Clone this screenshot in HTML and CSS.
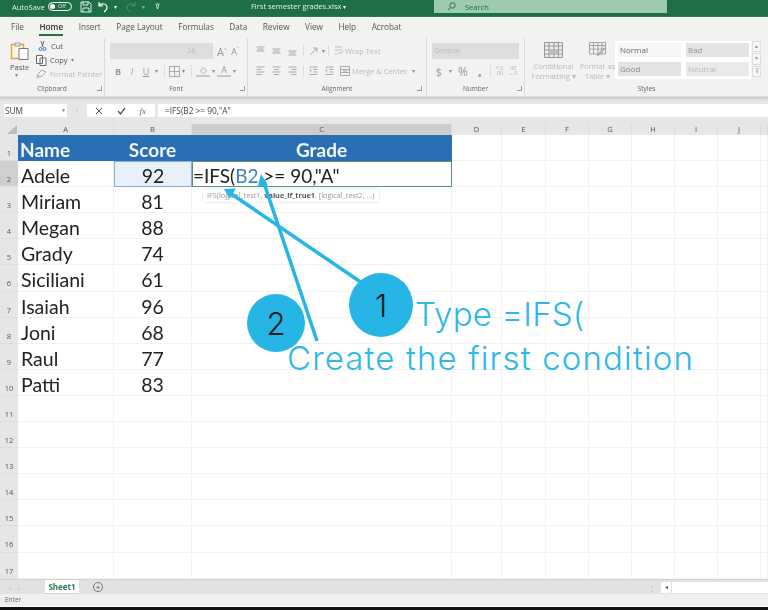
FILE: index.html
```html
<!DOCTYPE html>
<html lang="en">
<head>
<meta charset="utf-8">
<title>First semester grades.xlsx</title>
<link rel="stylesheet" href="styles.css">
</head>
<body>
<div class="page">
<div class="app">
  <header class="titlebar">
    <div class="qat">
      <span class="qat-label">AutoSave</span>
      <span class="toggle"><b></b>Off</span>
      <svg class="ic" width="12" height="12" viewBox="0 0 12 12"><path d="M1 1h8l2 2v8H1zM3 1v3h5V1M3 11V7h6v4" fill="none" stroke="#dfeee6"/></svg>
      <svg class="ic" width="12" height="12" viewBox="0 0 12 12"><path d="M2 1v4h4M2 5c2-3 8-3 8 2 0 2-2 3-3 4" fill="none" stroke="#fff" stroke-width="1.2"/></svg>
      <span class="caret">▾</span>
      <svg class="ic faint" width="12" height="12" viewBox="0 0 12 12"><path d="M10 1v4H6M10 5C8 2 2 2 2 7c0 2 2 3 3 4" fill="none" stroke="#8fbfa6"/></svg>
      <span class="caret faint">▾</span>
      <span class="caret qat-more">⊽</span>
    </div>
    <div class="doc-title">First semester grades.xlsx <span class="caret">▾</span></div>
    <div class="search">
      <svg width="9" height="9" viewBox="0 0 9 9"><circle cx="5.5" cy="3.5" r="2.7" fill="none" stroke="#1f6f47"/><path d="M3.5 5.5 1 8" stroke="#1f6f47"/></svg>
      <span>Search</span>
    </div>
  </header>

  <nav class="tabs">
    <span>File</span><span class="active">Home</span><span>Insert</span><span>Page Layout</span><span>Formulas</span><span>Data</span><span>Review</span><span>View</span><span>Help</span><span>Acrobat</span>
  </nav>

  <section class="ribbon">
    <div class="group g-clip">
      <div class="group-body">
        <div class="paste">
          <svg width="20" height="20" viewBox="0 0 20 20"><path d="M1.5 3.5h12v14h-12z" fill="#fbf3e2" stroke="#d9a441" stroke-width="1.4"/><path d="M5 2h5v3H5z" fill="#eee" stroke="#999"/><path d="M9 7.5h9v11H9z" fill="#fff" stroke="#777"/></svg>
          <span>Paste</span>
          <span class="chev">▾</span>
        </div>
        <div class="clip-list">
          <div class="clip-item"><svg width="9" height="10" viewBox="0 0 9 10"><path d="M3 0l2 6M6 0 4 6" stroke="#666"/><circle cx="2.5" cy="8" r="1.5" fill="none" stroke="#3a7cc2"/><circle cx="6.5" cy="8" r="1.5" fill="none" stroke="#3a7cc2"/></svg><span>Cut</span></div>
          <div class="clip-item"><svg width="11" height="11" viewBox="0 0 11 11"><path d="M.5.5h6v8h-6zM4 3h6v7.500H4z" fill="#fff" stroke="#666"/></svg><span>Copy</span><span class="chev">▾</span></div>
          <div class="clip-item off"><svg width="11" height="10" viewBox="0 0 11 10"><path d="M1 6l5-5 4 2-5 5z" fill="none" stroke="#aaa"/><path d="M1 6 .5 9.500 4 8" fill="#bbb"/></svg><span>Format Painter</span></div>
        </div>
      </div>
      <div class="group-label">Clipboard<i class="launcher"></i></div>
    </div>

    <div class="group g-font">
      <div class="group-body col">
        <div class="tool-row">
          <span class="combo font-name"></span>
          <span class="combo font-size">24</span>
          <span class="glyph big">A<sup>^</sup></span>
          <span class="glyph mid">A<sup>ˇ</sup></span>
        </div>
        <div class="tool-row r2">
          <span class="glyph"><b>B</b></span><span class="glyph"><em>I</em></span><span class="glyph u">U</span><span class="chev">▾</span>
          <span class="sep"></span>
          <svg width="11" height="11" viewBox="0 0 11 11"><path d="M.5.5h10v10H.5zM5.500.5v10M.5 5.500h10" fill="none" stroke="#aaa"/></svg><span class="chev">▾</span>
          <span class="sep"></span>
          <span class="glyph colour fill">◇</span><span class="chev">▾</span>
          <span class="glyph colour txt">A</span><span class="chev">▾</span>
        </div>
      </div>
      <div class="group-label">Font<i class="launcher"></i></div>
    </div>

    <div class="group g-align">
      <div class="group-body col">
        <div class="tool-row a1">
          <svg class="lines" width="11" height="10" viewBox="0 0 10 10"><path d="M1 1h8M2 3h6M1 5h8" stroke="#aaa"/></svg>
          <svg class="lines" width="11" height="10" viewBox="0 0 10 10"><path d="M1 3h8M2 5h6M1 7h8" stroke="#aaa"/></svg>
          <svg class="lines" width="11" height="10" viewBox="0 0 10 10"><path d="M1 5h8M2 7h6M1 9h8" stroke="#aaa"/></svg>
          <span class="sep"></span>
          <svg width="11" height="11" viewBox="0 0 11 11"><path d="M2 9 9 2M5 2h4v4" fill="none" stroke="#aaa"/></svg><span class="chev">▾</span>
          <span class="sep wrap-sep"></span>
          <span class="tool-text"><svg width="9" height="10" viewBox="0 0 9 10"><path d="M1 1h7M1 4h6c2 0 2 3 0 3H4M1 8h2" fill="none" stroke="#bbb"/></svg>Wrap Text</span>
        </div>
        <div class="tool-row a2">
          <svg class="lines" width="11" height="10" viewBox="0 0 10 10"><path d="M1 1h8M1 3.500h5M1 6h8M1 8.500h5" stroke="#aaa"/></svg>
          <svg class="lines" width="11" height="10" viewBox="0 0 10 10"><path d="M1 1h8M2.500 3.500h5M1 6h8M2.500 8.500h5" stroke="#aaa"/></svg>
          <svg class="lines" width="11" height="10" viewBox="0 0 10 10"><path d="M1 1h8M4 3.500h5M1 6h8M4 8.500h5" stroke="#aaa"/></svg>
          <span class="sep"></span>
          <svg class="lines" width="11" height="10" viewBox="0 0 10 10"><path d="M1 1h8M5 3.500h4M5 6h4M1 8.500h8M1 3l2 1.500L1 6" fill="none" stroke="#aaa"/></svg>
          <svg class="lines" width="11" height="10" viewBox="0 0 10 10"><path d="M1 1h8M5 3.500h4M5 6h4M1 8.500h8M3 3 1 4.500 3 6" fill="none" stroke="#aaa"/></svg>
          <span class="tool-text"><svg width="10" height="10" viewBox="0 0 10 10"><path d="M.5.5h9v9h-9zM.5 3.500h9M.5 6.500h9M3 5h4" fill="none" stroke="#aaa"/></svg>Merge &amp; Center<span class="chev">▾</span></span>
        </div>
      </div>
      <div class="group-label">Alignment<i class="launcher"></i></div>
    </div>

    <div class="group g-num">
      <div class="group-body col">
        <div class="tool-row"><span class="combo num-format">General</span></div>
        <div class="tool-row r2 n2">
          <span class="glyph sym">$</span><span class="chev">▾</span><span class="glyph sym pct">%</span><span class="glyph sym comma">❟</span><span class="sep"></span><span class="dec">+.0<br>.00</span><span class="dec">.00<br>→.0</span>
        </div>
      </div>
      <div class="group-label">Number<i class="launcher"></i></div>
    </div>

    <div class="group g-style">
      <div class="group-body">
        <div class="big-btn">
          <svg width="19" height="16" viewBox="0 0 19 16"><path d="M.5.5h18v15H.5zM.5 4h18M.5 8h18M.5 12h18M5 .5v15M10 .5v15M14.500.5v15" fill="#ececec" stroke="#999"/><path d="M6 8h8v3H6z" fill="#bbb"/></svg>
          <span>Conditional<br>Formatting ▾</span>
        </div>
        <div class="big-btn">
          <svg width="19" height="18" viewBox="0 0 19 18"><path d="M.5.5h18v13H.5zM.5 4h18M.5 8h18M5 .5v13M10 .5v13M14.500.5v13" fill="#f2f2f2" stroke="#999"/><path d="M8 15 17 6l1 2-8 8z" fill="#aaa"/></svg>
          <span>Format as<br>Table ▾</span>
        </div>
        <div class="gallery">
          <span class="sty normal">Normal</span><span class="sty bad">Bad</span><span class="sty good">Good</span><span class="sty neutral">Neutral</span>
        </div>
        <div class="gallery-scroll"><span>▴</span><span>▾</span><span>⊽</span></div>
      </div>
      <div class="group-label">Styles</div>
    </div>
  </section>

  <section class="formula-bar">
    <div class="name-box">SUM<span class="chev">▾</span></div>
    <span class="grip">⋮</span>
    <div class="fx-box">
      <svg width="8" height="8" viewBox="0 0 8 8"><path d="M1 1l6 6M7 1 1 7" stroke="#555"/></svg>
      <svg width="9" height="8" viewBox="0 0 9 8"><path d="M1 4l2.500 3L8 1" fill="none" stroke="#555" stroke-width="1.300"/></svg>
      <em>fx</em>
    </div>
    <div class="formula-input">=IFS(B2 &gt;= 90,"A"</div>
  </section>

  <section class="sheet">
    <div class="corner"><i></i></div>
    <div class="ch">A</div><div class="ch">B</div><div class="ch sel">C</div><div class="ch">D</div><div class="ch">E</div><div class="ch">F</div><div class="ch">G</div><div class="ch">H</div><div class="ch">I</div><div class="ch">J</div><div class="ch"></div>

    <div class="rh">1</div><div class="c hd nm">Name</div><div class="c hd">Score</div><div class="c hd">Grade</div><i class="c"></i><i class="c"></i><i class="c"></i><i class="c"></i><i class="c"></i><i class="c"></i><i class="c"></i><i class="c"></i>
    <div class="rh sel">2</div><div class="c nm">Adele</div><div class="c num active-ref">92</div><div class="c edit">=IFS(<span class="ref">B2</span> &gt;= 90,"A"</div><i class="c"></i><i class="c"></i><i class="c"></i><i class="c"></i><i class="c"></i><i class="c"></i><i class="c"></i><i class="c"></i>
    <div class="rh">3</div><div class="c nm">Miriam</div><div class="c num">81</div><i class="c"></i><i class="c"></i><i class="c"></i><i class="c"></i><i class="c"></i><i class="c"></i><i class="c"></i><i class="c"></i><i class="c"></i>
    <div class="rh">4</div><div class="c nm">Megan</div><div class="c num">88</div><i class="c"></i><i class="c"></i><i class="c"></i><i class="c"></i><i class="c"></i><i class="c"></i><i class="c"></i><i class="c"></i><i class="c"></i>
    <div class="rh">5</div><div class="c nm">Grady</div><div class="c num">74</div><i class="c"></i><i class="c"></i><i class="c"></i><i class="c"></i><i class="c"></i><i class="c"></i><i class="c"></i><i class="c"></i><i class="c"></i>
    <div class="rh">6</div><div class="c nm">Siciliani</div><div class="c num">61</div><i class="c"></i><i class="c"></i><i class="c"></i><i class="c"></i><i class="c"></i><i class="c"></i><i class="c"></i><i class="c"></i><i class="c"></i>
    <div class="rh">7</div><div class="c nm">Isaiah</div><div class="c num">96</div><i class="c"></i><i class="c"></i><i class="c"></i><i class="c"></i><i class="c"></i><i class="c"></i><i class="c"></i><i class="c"></i><i class="c"></i>
    <div class="rh">8</div><div class="c nm">Joni</div><div class="c num">68</div><i class="c"></i><i class="c"></i><i class="c"></i><i class="c"></i><i class="c"></i><i class="c"></i><i class="c"></i><i class="c"></i><i class="c"></i>
    <div class="rh">9</div><div class="c nm">Raul</div><div class="c num">77</div><i class="c"></i><i class="c"></i><i class="c"></i><i class="c"></i><i class="c"></i><i class="c"></i><i class="c"></i><i class="c"></i><i class="c"></i>
    <div class="rh">10</div><div class="c nm">Patti</div><div class="c num">83</div><i class="c"></i><i class="c"></i><i class="c"></i><i class="c"></i><i class="c"></i><i class="c"></i><i class="c"></i><i class="c"></i><i class="c"></i>
    <div class="rh">11</div><i class="c"></i><i class="c"></i><i class="c"></i><i class="c"></i><i class="c"></i><i class="c"></i><i class="c"></i><i class="c"></i><i class="c"></i><i class="c"></i><i class="c"></i>
    <div class="rh">12</div><i class="c"></i><i class="c"></i><i class="c"></i><i class="c"></i><i class="c"></i><i class="c"></i><i class="c"></i><i class="c"></i><i class="c"></i><i class="c"></i><i class="c"></i>
    <div class="rh">13</div><i class="c"></i><i class="c"></i><i class="c"></i><i class="c"></i><i class="c"></i><i class="c"></i><i class="c"></i><i class="c"></i><i class="c"></i><i class="c"></i><i class="c"></i>
    <div class="rh">14</div><i class="c"></i><i class="c"></i><i class="c"></i><i class="c"></i><i class="c"></i><i class="c"></i><i class="c"></i><i class="c"></i><i class="c"></i><i class="c"></i><i class="c"></i>
    <div class="rh">15</div><i class="c"></i><i class="c"></i><i class="c"></i><i class="c"></i><i class="c"></i><i class="c"></i><i class="c"></i><i class="c"></i><i class="c"></i><i class="c"></i><i class="c"></i>
    <div class="rh">16</div><i class="c"></i><i class="c"></i><i class="c"></i><i class="c"></i><i class="c"></i><i class="c"></i><i class="c"></i><i class="c"></i><i class="c"></i><i class="c"></i><i class="c"></i>
    <div class="rh">17</div><i class="c"></i><i class="c"></i><i class="c"></i><i class="c"></i><i class="c"></i><i class="c"></i><i class="c"></i><i class="c"></i><i class="c"></i><i class="c"></i><i class="c"></i>

    <div class="tip">IFS(logical_test1, <b>value_if_true1</b>, [logical_test2, ...)</div>
  </section>

  <section class="sheet-tabs">
    <span class="nav-arrows">‹&nbsp;&nbsp;&nbsp;›</span>
    <span class="sheet-tab">Sheet1</span>
    <span class="add-sheet">+</span>
    <span class="tabs-fill"></span>
    <span class="grip">⋮</span>
    <span class="scroll-left">◂</span>
    <span class="scroll-track"></span>
  </section>
  <footer class="status">Enter</footer>
</div>

<div class="bottom-edge"></div>

<svg class="arrows" width="768" height="610" viewBox="0 0 768 610">
  <path d="M365 285 230 193" fill="none" stroke="#26b5e5" stroke-width="3.5"/>
  <path d="M224 189l12-.5-6.500 10z" fill="#26b5e5"/>
  <path d="M317 341 263 180" fill="none" stroke="#26b5e5" stroke-width="3.500"/>
  <path d="M261 174l7 11-10.500 2z" fill="#26b5e5"/>
</svg>
<div class="badge one">1</div>
<div class="badge two">2</div>
<div class="note type">Type =IFS(</div>
<div class="note create">Create the first condition</div>
</div>
</body>
</html>
```
FILE: styles.css
```css
* { box-sizing: border-box; }
html, body { margin: 0; padding: 0; background: #000; }
.page { position: relative; width: 768px; height: 610px; overflow: hidden; background: #000; font-family: "Open Sans", "Noto Sans", sans-serif; }
.app { height: 607px; display: flex; flex-direction: column; background: #fff; filter: blur(0.6px); }
.bottom-edge { height: 3px; background: #111; }

/* title bar */
.titlebar { height: 17px; flex: none; background: #1e6e48; color: #e4f0ea; display: flex; font-size: 7.500px; border-bottom: 1px solid #2c7a55; }
.qat { width: 251px; display: flex; align-items: center; padding-left: 12px; height: 13px; }
.qat-label { width: 36px; }
.toggle { width: 24px; height: 9px; border: 1px solid #fff; border-radius: 5px; font-size: 5.500px; line-height: 7px; display: flex; align-items: center; gap: 2px; padding-left: 1px; margin-right: 8px; }
.toggle b { width: 5px; height: 5px; border-radius: 50%; background: #fff; margin-right: 1px; }
.ic { margin-right: 5px; flex: none; }
.caret { font-size: 6px; margin-right: 8px; color: #fff; }
.ic.faint, .caret.faint { opacity: .45; }
.qat-more { font-size: 7px; margin-left: 2px; }
.doc-title { width: 183px; height: 13px; line-height: 12px; white-space: nowrap; color: #e4f0ea; }
.search { width: 233px; height: 13px; background: #9dcbb0; display: flex; align-items: center; gap: 9px; padding-left: 13px; color: #1f6f47; }

/* tabs */
.tabs { height: 21px; flex: none; background: #f3f2f1; display: flex; font-size: 8.200px; color: #555; padding-left: 11px; line-height: 20px; }
.tabs span { margin-right: 15.500px; position: relative; white-space: nowrap; }
.tabs .active { color: #333; font-weight: 600; border-bottom: 2px solid #217346; height: 19px; }

/* ribbon */
.ribbon { height: 59px; flex: none; display: flex; background: #f3f2f1; box-shadow: 0 2px 2px rgba(0,0,0,.13); position: relative; z-index: 1; border-bottom: 1px solid #ddd; }
.group { position: relative; display: flex; flex-direction: column; border-right: 1px solid #dadada; }
.group-body { flex: 1; display: flex; min-height: 0; }
.group-body.col { flex-direction: column; }
.group-label { height: 15px; flex: none; text-align: center; font-size: 6.500px; color: #666; line-height: 15px; position: relative; }
.launcher { position: absolute; right: 2px; top: 5px; width: 5px; height: 5px; border-right: 1px solid #999; border-bottom: 1px solid #999; }
.g-clip { width: 105px; }
.g-font { width: 143px; padding: 5px 5px 0; }
.g-align { width: 179px; padding: 5px 7px 0; }
.g-num { width: 98px; padding: 5px 5px 0; }
.g-style { flex: 1; border-right: 0; padding-top: 3px; }
.g-font .group-label, .g-align .group-label, .g-num .group-label { margin: 0 -5px; }
.chev { font-size: 6px; color: #888; margin: 0 3px; }

.paste { width: 36px; padding: 3px 0 0 10px; display: flex; flex-direction: column; align-items: flex-start; font-size: 7.500px; color: #555; }
.paste span:nth-child(2) { margin-top: 1px; line-height: 10px; }
.paste .chev { margin: 0 0 0 5px; line-height: 7px; }
.clip-list { padding-top: 1px; display: flex; flex-direction: column; }
.clip-item { height: 15px; display: flex; align-items: center; font-size: 7.500px; color: #555; white-space: nowrap; }
.clip-item svg { margin-right: 3px; }
.clip-item:first-child svg { margin-left: 2px; }
.clip-item:first-child span { margin-left: 1px; }
.clip-item.off { color: #bbb; }

.tool-row { display: flex; align-items: center; height: 16px; color: #999; }
.r2 { margin-top: 4px; }
.combo { height: 16px; background: #dedddc; display: block; font-size: 7px; color: #bbb; line-height: 16px; }
.font-name { width: 75px; }
.font-size { width: 28px; padding-left: 2px; margin-right: 3px; }
.glyph { font-size: 9px; width: 14px; text-align: center; color: #999; flex: none; }
.glyph.big { font-size: 11px; width: 12px; }
.glyph.mid { font-size: 9px; }
.glyph sup { font-size: 5px; }
.glyph.u { text-decoration: underline; }
.sep { width: 1px; height: 12px; background: #ddd; margin: 0 4px; flex: none; }
.g-font .r2 { padding-left: 1px; }
.g-font .r2 .chev { margin: 0 2px; }
.colour { border-bottom: 2px solid #c9c9c9; line-height: 10px; }

.lines { margin-right: 5px; }
.a1, .a2 { font-size: 7.500px; }
.a2 { margin-top: 4px; }
.a1 .sep, .a2 .sep { margin-left: 0; margin-right: 4px; }
.a1 .wrap-sep { margin-left: 0; margin-right: 5px; }
.tool-text { display: flex; align-items: center; gap: 2px; color: #bbb; white-space: nowrap; }

.num-format { width: 89px; padding-left: 2px; }
.n2 { padding-left: 0; }
.sym { font-size: 11px; }
.pct { font-size: 12px; width: 16px; }
.comma { font-size: 9px; width: 16px; margin-left: 1px; }
.n2 .sep { margin: 0 2px; }
.dec { font-size: 5px; line-height: 5px; width: 17px; text-align: center; color: #aaa; }

.big-btn { width: 45px; display: flex; flex-direction: column; align-items: center; font-size: 7.500px; line-height: 10px; color: #bbb; text-align: center; padding-top: 1px; }
.big-btn span { margin-top: 3px; white-space: nowrap; }
.g-style .big-btn:first-child { margin-left: 6px; margin-right: -1px; }
.gallery { margin-left: -5px; width: 136px; height: 38px; background: #fff; display: grid; grid-template-columns: 63px 63px; grid-template-rows: 14px 14px; gap: 5px 5px; padding: 2px 3px; font-size: 8px; flex: none; }
.sty { padding-left: 2px; line-height: 14px; color: #888; background: #e4e2e3; }
.sty.normal { background: #f6f4f5; color: #666; }
.sty.bad { color: #999; }
.sty.neutral { color: #bbb; background: #ece9ea; }
.gallery-scroll { margin-left: 1px; width: 9px; height: 36px; display: flex; flex-direction: column; gap: 1px; flex: none; }
.gallery-scroll span { flex: 1; background: #f7f7f7; border: 1px solid #ddd; font-size: 6px; line-height: 9px; text-align: center; color: #999; }

/* formula bar */
.formula-bar { height: 27px; flex: none; background: #e6e6e6; display: flex; align-items: flex-start; padding: 7px 0 0 4px; font-size: 8.300px; color: #444; }
.name-box { width: 63px; height: 13px; background: #fff; line-height: 13px; display: flex; justify-content: space-between; padding-left: 1px; }
.name-box .chev { margin-right: 2px; }
.formula-bar .grip { width: 20px; text-align: center; line-height: 13px; color: #bbb; }
.fx-box { width: 68px; height: 13px; background: #fff; display: flex; align-items: center; justify-content: space-between; padding: 0 9px 0 8px; }
.fx-box em { font-family: "Liberation Serif", serif; font-size: 9px; color: #666; }
.formula-input { flex: 1; margin-left: 3px; height: 13px; background: #fff; line-height: 13px; padding-left: 7px; }

/* sheet */
.sheet { position: relative; flex: none; height: 455px; display: grid; grid-template-columns: 18px 96px 78px 260px 50px 44px 43px 43px 43px 43px 43px 7px; grid-template-rows: 11px repeat(17, 26.100px); overflow: hidden; background: #fff; }
.corner { background: #e6e6e6; position: relative; }
.corner i { position: absolute; right: 1px; bottom: 1px; border-left: 10px solid transparent; border-bottom: 9px solid #bdbdbd; }
.ch { background: #e6e6e6; font-size: 7.500px; text-align: center; line-height: 11px; color: #555; border-right: 1px solid #dcdcdc; }
.ch.sel { background: #cdcdcd; }
.rh { background: #e6e6e6; font-size: 7.500px; text-align: center; color: #555; line-height: 12px; padding-top: 12px; border-bottom: 1px solid #dedede; }
.rh.sel { background: #cfcfcf; }
.c { display: block; border-right: 1px solid #f2f2f2; border-bottom: 1px solid #f2f2f2; font-family: Lato, "Open Sans", sans-serif; font-style: normal; font-size: 19.500px; line-height: 30px; color: #222; white-space: nowrap; overflow: visible; }
.nm { padding-left: 3px; }
.num { text-align: center; }
.hd { background: #2a6fb4; color: #f1f6fb; font-weight: 700; border-color: #2a6fb4; font-size: 19px; line-height: 29px; text-align: center; }
.hd.nm { text-align: left; padding-left: 2px; }
.active-ref { background: #e8f0fa; border: 1px solid #86add6; line-height: 28px; }
.edit { border: 1px solid #5d8f78; font-size: 19px; line-height: 28px; background: #fff; }
.ref { color: #3f7fbf; }
.tip { position: absolute; left: 203px; top: 65px; width: 176px; height: 13px; background: #fff; box-shadow: 0 0 2px rgba(0,0,0,.2); font-size: 7.300px; line-height: 13px; color: #999; padding-left: 4px; white-space: nowrap; }
.tip b { color: #555; }

/* sheet tabs + status */
.sheet-tabs { height: 15px; flex: none; background: #e2e2e2; display: flex; align-items: center; border-top: 1px solid #d4d4d4; font-size: 8px; }
.nav-arrows { width: 45px; padding-left: 9px; color: #bbb; }
.sheet-tab { width: 34px; height: 14px; background: #fff; color: #2a7a52; font-weight: 700; text-align: center; line-height: 13px; border-bottom: 1px solid #cfcfcf; }
.add-sheet { width: 10px; height: 10px; margin-left: 14px; border: 1px solid #777; border-radius: 50%; font-size: 8px; line-height: 8px; text-align: center; color: #555; }
.tabs-fill { flex: 1; }
.sheet-tabs .grip { width: 8px; text-align: center; color: #aaa; margin-right: 5px; }
.scroll-left { width: 10px; height: 11px; background: #fff; font-size: 6px; line-height: 11px; text-align: center; color: #555; margin-right: 1px; }
.scroll-track { width: 96px; height: 11px; background: #fff; }
.status { height: 12px; flex: none; background: #f0efed; font-size: 6.500px; line-height: 12px; color: #666; padding-left: 5px; }

/* annotations */
.arrows { position: absolute; left: 0; top: 0; pointer-events: none; }
.badge { position: absolute; display: flex; align-items: center; justify-content: center; border-radius: 50%; background: #26b5e5; color: #0d1a20; font-family: Inter, "Open Sans", sans-serif; font-weight: 300; font-size: 31px; }
.badge.one { left: 349px; top: 273px; width: 64px; height: 64px; }
.badge.two { left: 247px; top: 294px; width: 58px; height: 58px; }
.note { position: absolute; color: #2cb8e8; font-family: Inter, "Open Sans", sans-serif; font-weight: 300; white-space: nowrap; line-height: 40px; font-size: 33px; }
.note.type { left: 415px; top: 294px; letter-spacing: .2px; }
.note.create { left: 287px; top: 338px; letter-spacing: 1.150px; }
```
